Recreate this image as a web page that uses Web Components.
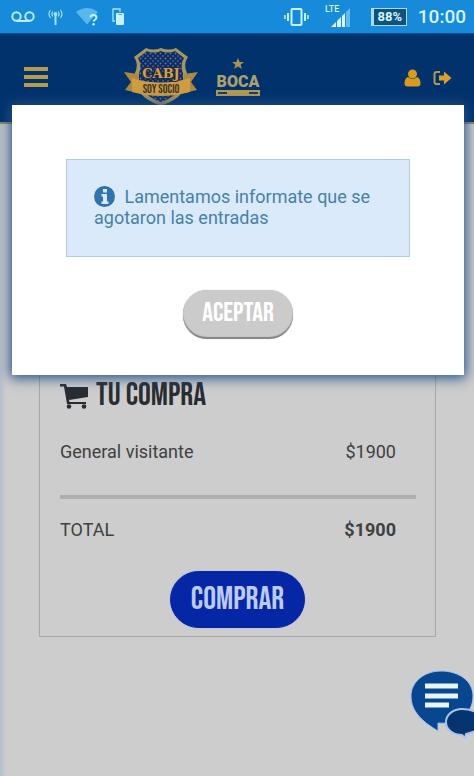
<!DOCTYPE html>
<html lang="es">
<head>
<meta charset="utf-8">
<meta name="viewport" content="width=device-width, initial-scale=1">
<title>Soy Socio</title>
<style>
    body {
        margin: 0;
        min-height: 100vh;
        background: linear-gradient(90deg, #b5bfca 0, #cdcdcd 6px);
        color: #404040;
        font: 18px/21px Roboto, "Liberation Sans", sans-serif;
        --display: "Bebas Neue", "Liberation Sans Narrow", "Liberation Sans", sans-serif;
    }
</style>
</head>
<body>
    <status-bar time="10:00" battery="88%"></status-bar>
    <site-header></site-header>
    <purchase-card heading="TU COMPRA">
        <purchase-row slot="items" label="General visitante" price="$1900"></purchase-row>
        <purchase-row slot="total" label="TOTAL" price="$1900" strong></purchase-row>
        <pill-button slot="action">COMPRAR</pill-button>
    </purchase-card>
    <chat-button></chat-button>
    <notice-dialog>
        Lamentamos informate que se agotaron las entradas
        <pill-button slot="action" muted>ACEPTAR</pill-button>
    </notice-dialog>

<script>
class BaseElement extends HTMLElement {

    constructor() {
        super();
        this.attachShadow({ mode: "open" });
    }

    connectedCallback() {
        this.shadowRoot.innerHTML = this.render();
    }
}

/**
 * Phone status bar
 */
class StatusBar extends BaseElement {
    render() {
        return `
            <style>
                :host {
                    display: flex;
                    justify-content: space-between;
                    align-items: center;
                    box-sizing: border-box;
                    height: 33px;
                    padding: 0 8px 0 11px;
                    background: #178bd9;
                    color: #d5f6ff;
                }
                .group { display: flex; align-items: center; }
                .left { gap: 13px; }
                .right { gap: 16px; }
                svg { display: block; }
                .battery {
                    box-sizing: border-box;
                    width: 36px;
                    height: 18px;
                    border: 1px solid #a5def5;
                    border-left-width: 3px;
                    background: #10527f;
                    font-size: 13px;
                    font-weight: 700;
                    line-height: 16px;
                    text-align: center;
                }
                time { font-size: 19px; font-weight: 500; margin-left: -5px; }
            </style>
            <div class="group left">
                <svg width="24" height="12" viewBox="0 0 24 12" fill="none" stroke="#b5efff" stroke-width="2">
                    <circle cx="5.500" cy="5.500" r="4.200"/><circle cx="18.500" cy="5.500" r="4.200"/><path d="M5.500 10h13"/>
                </svg>
                <svg width="15" height="18" viewBox="0 0 15 18" fill="none" stroke="#a5e2f6" stroke-width="1.200">
                    <path d="M4.800 3.500q-1.700 2.500 0 5M2.500 2q-3 4 0 8M10.200 3.500q1.700 2.500 0 5M12.500 2q3 4 0 8"/>
                    <path d="M7.500 6v11" stroke-width="2"/><circle cx="7.500" cy="6" r="1.300" fill="#a5e2f6"/>
                </svg>
                <svg width="23" height="18" viewBox="0 0 23 18">
                    <path d="M0 4Q11 -4 22 4L11 16.500z" fill="#58b7ec"/>
                    <path d="M14.500 9.500q0-2.500 3-2.500t3 2.500q0 1.500-1.600 2.300-1.300.7-1.300 1.800" fill="none" stroke="#c5f1ff" stroke-width="2"/>
                    <circle cx="17.600" cy="16.200" r="1.300" fill="#c5f1ff"/>
                </svg>
                <svg width="13" height="18" viewBox="0 0 13 18">
                    <path d="M3 13H1V1h7v3" fill="none" stroke="#a9e3f7" stroke-width="1.300"/>
                    <rect x="4" y="5" width="8" height="12" rx="1" fill="#c5f3ff"/><path d="M6 6.500h4" stroke="#58afd8"/>
                </svg>
            </div>
            <div class="group right">
                <svg width="25" height="20" viewBox="0 0 25 20" fill="none" stroke="#c5f5ff" stroke-width="2">
                    <rect x="7.500" y="2" width="10" height="16" rx="1"/><path d="M4 6v8M21 6v8"/><path d="M1 8v4M24 8v4" stroke-width="1.500"/>
                </svg>
                <svg width="30" height="28" viewBox="0 0 30 28">
                    <text x="0" y="9" font-size="9" font-weight="500" fill="#d5f6ff">LTE</text>
                    <path d="M6 24l5-5v5zM12 18l4-4v10h-4zM17 13l3-3v14h-3z" fill="#d5f6ff"/><path d="M21 9l4-4v19h-4z" fill="#65b9e5"/>
                </svg>
                <span class="battery">${this.getAttribute('battery')}</span>
                <time>${this.getAttribute('time')}</time>
            </div>
        `;
    }
}

/**
 * Club header with menu, logos and session links
 */
class SiteHeader extends BaseElement {
    render() {
        return `
            <style>
                :host {
                    display: grid;
                    grid-template-columns: 1fr auto 1fr;
                    align-items: center;
                    box-sizing: border-box;
                    height: 91px;
                    padding: 0 22px 0 24px;
                    background: #01326c;
                    border-top: 1px solid #07509a;
                    border-bottom: 2px solid #8d8b65;
                }
                button { justify-self: start; padding: 0; border: 0; background: none; }
                svg { display: block; }
                .logos { display: flex; align-items: center; gap: 17px; padding-right: 92px; }
                nav { display: flex; align-items: center; justify-self: end; gap: 12px; }
            </style>
            <button aria-label="Menú">
                <svg width="24" height="22" viewBox="0 0 24 22" fill="#b69b4c">
                    <rect y="0" width="24" height="4"/><rect y="8" width="24" height="4"/><rect y="16" width="24" height="4"/>
                </svg>
            </button>
            <div class="logos">
                <svg width="74" height="62" viewBox="0 0 74 62">
                    <defs>
                        <pattern id="dots" width="5" height="5" patternUnits="userSpaceOnUse">
                            <rect width="5" height="5" fill="#0d2b61"/><circle cx="1.500" cy="1.500" r="1" fill="#5c72a3"/><circle cx="4" cy="4" r="1" fill="#465f95"/>
                        </pattern>
                    </defs>
                    <path d="M22 1q7 3 15 0 8 3 15 0l12 9q-5 7-1 16 3 23-26 33Q8 49 11 26q4-9-1-16z" fill="#a69761"/>
                    <path d="M23 4q7 3 14 0 7 3 14 0l9 7q-4 7-1 16 2 20-22 28Q13 47 15 27q3-9-1-16z" fill="url(#dots)"/>
                    <path d="M0 25l14 2v19L1 43l6-8zM74 25l-14 2v19l13-3-6-8z" fill="#ad8843"/>
                    <path d="M8 31q29 9 58 0v14q-29 8-58 0z" fill="#ce9d42"/>
                    <text x="37" y="31" text-anchor="middle" font-family="DejaVu Serif, Liberation Serif, serif" font-size="13" font-weight="700" fill="#d5a13d" stroke="#1d2748" stroke-width="2" paint-order="stroke">CABJ</text>
                    <text x="37" y="46" text-anchor="middle" font-family="Bebas Neue, Liberation Sans Narrow, sans-serif" font-size="12" fill="#40362b">SOY SOCIO</text>
                </svg>
                <svg width="46" height="40" viewBox="0 0 46 40">
                    <path d="M23 0l1.700 4h4.300l-3.400 2.700 1.300 4.300-3.900-2.600-3.900 2.600 1.300-4.300L17 4h4.300z" fill="#a69157"/>
                    <text x="23" y="29" text-anchor="middle" font-family="Roboto, sans-serif" font-size="16" font-weight="900" fill="#ada06c">BOCA</text>
                    <rect x="1" y="32" width="44" height="6" fill="#b69b50"/><path d="M3 34h9v2H3zM34 34h9v2h-9z" fill="#173b69"/>
                </svg>
            </div>
            <nav>
                <a href="#cuenta" aria-label="Mi cuenta">
                    <svg width="17" height="18" viewBox="0 0 17 18" fill="#d89b1e">
                        <circle cx="8.500" cy="5" r="4.500"/><path d="M4 8q4.500 4 9 0 3.500 1 3.500 6.500 0 3-3 3h-10q-3 0-3-3Q.5 9 4 8z"/>
                    </svg>
                </a>
                <a href="#salir" aria-label="Salir">
                    <svg width="19" height="16" viewBox="0 0 19 16">
                        <path d="M7 2H3.500Q1.500 2 1.500 4v8q0 2 2 2H7" fill="none" stroke="#ad9858" stroke-width="2"/>
                        <path d="M6 5.500h5V1.500L18.500 8 11 14.500v-4H6z" fill="#dca02a"/>
                    </svg>
                </a>
            </nav>
        `;
    }
}

/**
 * Rounded button
 */
class PillButton extends BaseElement {
    render() {
        return `
            <style>
                :host { display: inline-block; }
                button {
                    display: block;
                    height: 57px;
                    padding: 0 20px;
                    border: 1px solid #0b249b;
                    border-radius: 29px;
                    background: #0527a5;
                    box-shadow: 0 0 2px #a9bdf0;
                    color: #bccbf6;
                    font: 400 32px/32px var(--display);
                }
                :host([muted]) button {
                    height: 49px;
                    padding: 0 19px 4px;
                    border: 0;
                    border-radius: 24px;
                    background: #cbcbcb;
                    box-shadow: inset 0 -2px 1px #858585, 0 0 1px #aaa;
                    color: #fff;
                    font-size: 27px;
                }
            </style>
            <button><slot></slot></button>
        `;
    }
}

/**
 * One line of the purchase
 */
class PurchaseRow extends BaseElement {
    render() {
        const tag = this.hasAttribute('strong') ? 'strong' : 'span';
        return `
            <style>
                :host { display: flex; justify-content: space-between; padding-right: 20px; }
            </style>
            <span>${this.getAttribute('label')}</span>
            <${tag}>${this.getAttribute('price')}</${tag}>
        `;
    }
}

/**
 * Purchase summary
 */
class PurchaseCard extends BaseElement {
    render() {
        return `
            <style>
                :host {
                    display: block;
                    margin: 231px 38px 0 39px;
                    padding: 24px 19px 8px 20px;
                    border: 1px solid #a8a8a8;
                }
                h2 {
                    display: flex;
                    align-items: center;
                    gap: 7px;
                    margin: 0 0 29px;
                    color: #292d31;
                    font: 400 32px/32px var(--display);
                }
                hr { height: 4px; margin: 33px 0 20px; border: 0; background: #afafaf; }
                .action { display: flex; justify-content: center; margin-top: 31px; padding-right: 1px; }
            </style>
            <h2>
                <svg width="29" height="25" viewBox="0 0 29 25" fill="#292d31">
                    <path d="M0 0h6l1 3h21v10L9 16l.5 2H26v2H7L4 2.500H0z"/><circle cx="9" cy="22.500" r="2.300"/><circle cx="24" cy="22.500" r="2.300"/>
                </svg>
                ${this.getAttribute('heading')}
            </h2>
            <slot name="items"></slot>
            <hr>
            <slot name="total"></slot>
            <div class="action"><slot name="action"></slot></div>
        `;
    }
}

/**
 * Notice shown over the page
 */
class NoticeDialog extends BaseElement {
    render() {
        return `
            <style>
                :host {
                    position: absolute;
                    top: 105px;
                    left: 12px;
                    right: 10px;
                }
                section {
                    padding: 54px 54px 36px;
                    background: #fff;
                    box-shadow: 0 1px 12px 2px #244f86;
                }
                p {
                    margin: 0 0 33px;
                    padding: 26px 27px 28px;
                    border: 1px solid #afcbdc;
                    background: #daeafa;
                    color: #4781a8;
                }
                svg { margin-right: 5px; vertical-align: -4px; }
                .action { display: flex; justify-content: center; }
            </style>
            <section role="dialog" aria-modal="true" aria-label="Aviso">
                <p>
                    <svg width="21" height="21" viewBox="0 0 21 21">
                        <circle cx="10.500" cy="10.500" r="10.500" fill="#2f73ad"/>
                        <path d="M9 3h4v3.500H9zM7.500 8H13v7.500h1.500V18h-7v-2.500H9v-5H7.500z" fill="#daeafa"/>
                    </svg>
                    <slot></slot>
                </p>
                <div class="action"><slot name="action"></slot></div>
            </section>
        `;
    }
}

/**
 * Floating chat shortcut
 */
class ChatButton extends BaseElement {
    render() {
        return `
            <style>
                :host { position: fixed; right: 0; bottom: 37px; }
                button { display: block; padding: 0; border: 0; background: none; }
                svg { display: block; }
            </style>
            <button aria-label="Chat">
                <svg width="64" height="69" viewBox="0 0 64 69" stroke="#a5c4ed">
                    <path d="M31 1C14 1 1 12 1 26c0 16 12 26 27 35v-8c20 2 35-9 35-27C63 11 49 1 31 1z" fill="#08468f"/>
                    <path d="M52 39c-9 0-16 6-16 13 0 8 8 13 16 13l3 3 1-4 10-3V42q-7-3-14-3z" fill="#06346f" stroke-width="2"/>
                    <path d="M15 16h33M15 26h33M15 35h24" stroke="#e8f6ff" stroke-width="5"/>
                </svg>
            </button>
        `;
    }
}

customElements.define('status-bar', StatusBar);
customElements.define('site-header', SiteHeader);
customElements.define('pill-button', PillButton);
customElements.define('purchase-row', PurchaseRow);
customElements.define('purchase-card', PurchaseCard);
customElements.define('notice-dialog', NoticeDialog);
customElements.define('chat-button', ChatButton);
</script>
</body>
</html>
